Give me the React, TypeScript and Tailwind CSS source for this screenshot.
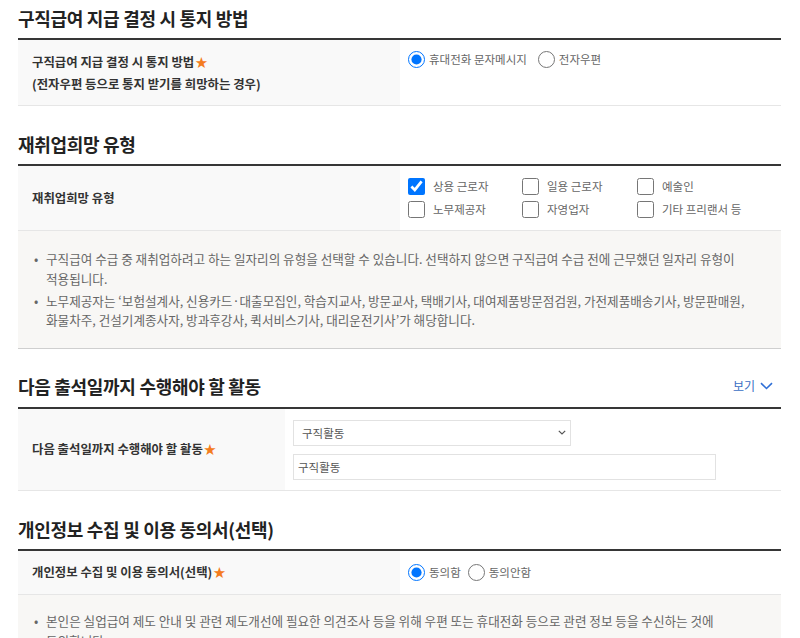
import React from "react";

function Title({ children, right }: { children: React.ReactNode; right?: React.ReactNode }) {
  return (
    <div className="flex h-[40px] items-center justify-between border-b-2 border-[#363636] pb-[3px]">
      <h2 className="text-[18px] font-semibold leading-none text-[#222] tracking-[-0.3px]">{children}</h2>
      {right}
    </div>
  );
}

function Star() {
  return <span className="ml-[1px] text-[#f47c20]">★</span>;
}

function Radio({ label, checked, name }: { label: string; checked?: boolean; name: string }) {
  return (
    <label className="flex items-center gap-[4px] text-[11.5px] text-[#666]">
      <input type="radio" name={name} defaultChecked={checked} className="m-0 h-[17px] w-[17px]" />
      <span>{label}</span>
    </label>
  );
}

function Check({ label, checked }: { label: string; checked?: boolean }) {
  return (
    <label className="flex items-center gap-[8px] text-[11.5px] text-[#666]">
      <input type="checkbox" defaultChecked={checked} className="m-0 h-[17px] w-[17px]" />
      <span>{label}</span>
    </label>
  );
}

export default function App() {
  return (
    <div className="w-[800px] bg-white pl-[18px] pr-[19px] font-['Noto_Sans_CJK_KR','Noto_Sans',sans-serif]">
      {/* Section 1 */}
      <section>
        <Title>구직급여 지급 결정 시 통지 방법</Title>
        <div className="flex h-[66px] border-b border-[#e6e6e6]">
          <div className="flex w-[382px] flex-col justify-center gap-[2px] bg-[#f9f9f9] pl-[14px] text-[12.4px] font-bold leading-[20px] text-[#333]">
            <div>
              구직급여 지급 결정 시 통지 방법
              <Star />
            </div>
            <div>(전자우편 등으로 통지 받기를 희망하는 경우)</div>
          </div>
          <div className="flex items-start gap-[11px] pl-[8px] pt-[11px]">
            <Radio name="notify" label="휴대전화 문자메시지" checked />
            <Radio name="notify" label="전자우편" />
          </div>
        </div>
      </section>

      {/* Section 2 */}
      <section className="mt-[20px]">
        <Title>재취업희망 유형</Title>
        <div className="flex h-[65px] border-b border-[#e6e6e6]">
          <div className="flex w-[382px] items-center bg-[#f9f9f9] pl-[14px] text-[12.4px] font-bold text-[#333]">
            재취업희망 유형
          </div>
          <div className="grid grid-cols-[114px_115px_120px] content-center gap-y-[6px] pl-[8px]">
            <Check label="상용 근로자" checked />
            <Check label="일용 근로자" />
            <Check label="예술인" />
            <Check label="노무제공자" />
            <Check label="자영업자" />
            <Check label="기타 프리랜서 등" />
          </div>
        </div>
        <div className="border-b border-[#cfcfcf] bg-[#f8f7f5] py-[18px] pl-[16px] text-[12.6px] leading-[19.5px] text-[#666]">
          <ul className="flex flex-col gap-[2.5px]">
            <li className="flex">
              <span className="w-[12px] shrink-0">•</span>
              <span className="whitespace-nowrap">
                구직급여 수급 중 재취업하려고 하는 일자리의 유형을 선택할 수 있습니다. 선택하지 않으면 구직급여 수급 전에 근무했던 일자리 유형이
                <br />
                적용됩니다.
              </span>
            </li>
            <li className="flex">
              <span className="w-[12px] shrink-0">•</span>
              <span className="whitespace-nowrap">
                노무제공자는 ‘보험설계사, 신용카드·대출모집인, 학습지교사, 방문교사, 택배기사, 대여제품방문점검원, 가전제품배송기사, 방문판매원,
                <br />
                화물차주, 건설기계종사자, 방과후강사, 퀵서비스기사, 대리운전기사’가 해당합니다.
              </span>
            </li>
          </ul>
        </div>
      </section>

      {/* Section 3 */}
      <section className="mt-[20px]">
        <Title
          right={
            <button className="flex items-center gap-[5px] pr-[8px] text-[12px] text-[#3b6fc4]">
              보기
              <svg width="13" height="8" viewBox="0 0 13 8" fill="none">
                <path d="M1 1.2 6.5 6.5 12 1.2" stroke="#2f6fd6" strokeWidth="1.6" />
              </svg>
            </button>
          }
        >
          다음 출석일까지 수행해야 할 활동
        </Title>
        <div className="flex border-b border-[#e6e6e6]">
          <div className="flex w-[267px] items-center bg-[#f9f9f9] pl-[14px] text-[12.4px] font-bold text-[#333]">
            다음 출석일까지 수행해야 할 활동
            <Star />
          </div>
          <div className="flex flex-col gap-[8px] py-[10px] pl-[8px]">
            <div className="relative w-[278px]">
              <select className="h-[26px] w-full appearance-none border border-[#e2e2e2] bg-white pl-[8px] text-[11.5px] text-[#555]">
                <option>구직활동</option>
              </select>
              <svg className="pointer-events-none absolute right-[5px] top-[11px]" width="8" height="5" viewBox="0 0 8 5" fill="none">
                <path d="M0.8 0.8 4 4 7.2 0.8" stroke="#555" strokeWidth="1.2" />
              </svg>
            </div>
            <input
              type="text"
              defaultValue="구직활동"
              className="h-[26px] w-[423px] border border-[#e2e2e2] bg-white pl-[4px] text-[11.5px] text-[#555] outline-none"
            />
          </div>
        </div>
      </section>

      {/* Section 4 */}
      <section className="mt-[20px]">
        <Title>개인정보 수집 및 이용 동의서(선택)</Title>
        <div className="flex h-[44px] border-b border-[#e6e6e6]">
          <div className="flex w-[382px] items-center bg-[#f9f9f9] pl-[14px] text-[12.4px] font-bold text-[#333]">
            개인정보 수집 및 이용 동의서(선택)
            <Star />
          </div>
          <div className="flex items-center gap-[7px] pl-[8px]">
            <Radio name="agree" label="동의함" checked />
            <Radio name="agree" label="동의안함" />
          </div>
        </div>
        <div className="bg-[#f8f7f5] py-[16px] pl-[16px] text-[12.6px] leading-[19.5px] text-[#666]">
          <ul>
            <li className="flex">
              <span className="w-[12px] shrink-0">•</span>
              <span className="whitespace-nowrap">
                본인은 실업급여 제도 안내 및 관련 제도개선에 필요한 의견조사 등을 위해 우편 또는 휴대전화 등으로 관련 정보 등을 수신하는 것에
                <br />
                동의합니다.
              </span>
            </li>
          </ul>
        </div>
      </section>
    </div>
  );
}
